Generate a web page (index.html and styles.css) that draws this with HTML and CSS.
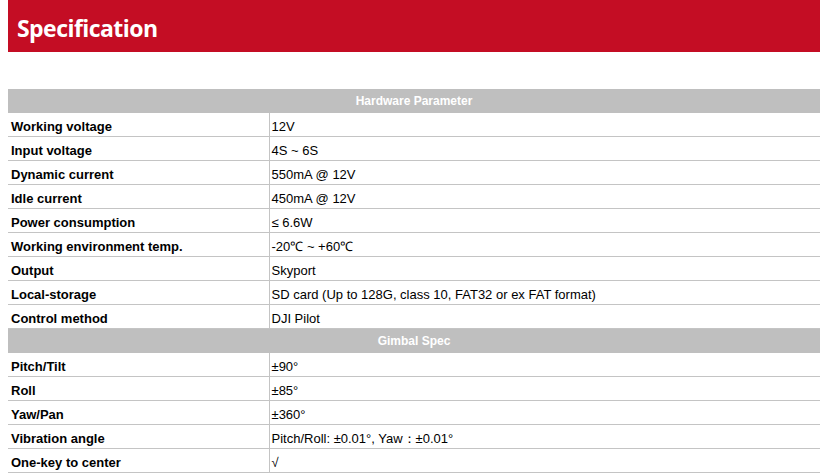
FILE: index.html
```html
<!DOCTYPE html>
<html>
<head>
<meta charset="utf-8">
<link rel="stylesheet" href="styles.css">
</head>
<body>
<div class="page">
  <div class="banner"><h1 class="title">Specification</h1></div>
  <table class="spec">
    <colgroup><col class="ck"><col class="cv"></colgroup>
    <tr class="group"><td colspan="2">Hardware Parameter</td></tr>
    <tr><td class="k">Working voltage</td><td class="v">12V</td></tr>
    <tr><td class="k">Input voltage</td><td class="v">4S ~ 6S</td></tr>
    <tr><td class="k">Dynamic current</td><td class="v">550mA @ 12V</td></tr>
    <tr><td class="k">Idle current</td><td class="v">450mA @ 12V</td></tr>
    <tr><td class="k">Power consumption</td><td class="v">≤ 6.6W</td></tr>
    <tr><td class="k">Working environment temp.</td><td class="v">-20℃ ~ +60℃</td></tr>
    <tr><td class="k">Output</td><td class="v">Skyport</td></tr>
    <tr><td class="k">Local-storage</td><td class="v">SD card (Up to 128G, class 10, FAT32 or ex FAT format)</td></tr>
    <tr><td class="k">Control method</td><td class="v">DJI Pilot</td></tr>
    <tr class="group"><td colspan="2">Gimbal Spec</td></tr>
    <tr><td class="k">Pitch/Tilt</td><td class="v">±90°</td></tr>
    <tr><td class="k">Roll</td><td class="v">±85°</td></tr>
    <tr><td class="k">Yaw/Pan</td><td class="v">±360°</td></tr>
    <tr><td class="k">Vibration angle</td><td class="v">Pitch/Roll: ±0.01°, Yaw：±0.01°</td></tr>
    <tr><td class="k">One-key to center</td><td class="v">√</td></tr>
  </table>
</div>
</body>
</html>
```
FILE: styles.css
```css
html, body {
  margin: 0;
  padding: 0;
  background: #ffffff;
}
.page {
  padding-left: 8px;
}
.banner {
  background: #c40d24;
  height: 52px;
  display: flex;
  align-items: center;
  padding-left: 9px;
  margin-bottom: 37px;
}
.title {
  margin: 0;
  color: #ffffff;
  font-family: "Open Sans", "Liberation Sans", sans-serif;
  font-weight: 700;
  font-size: 23px;
  letter-spacing: -0.55px;
  line-height: 1;
  padding-top: 4px;
}
.spec {
  width: 812px;
  border-collapse: collapse;
  table-layout: fixed;
  font-family: "Liberation Sans", Arial, sans-serif;
  font-size: 13px;
  color: #000000;
}
.ck {
  width: 261px;
}
.spec td {
  height: 17px;
  padding: 6px 0 0 3px;
  border-bottom: 1px solid #c4c4c4;
  vertical-align: top;
  white-space: nowrap;
  line-height: 15px;
}
.spec .k {
  font-weight: 700;
}
.spec .v {
  border-left: 1px solid #c4c4c4;
  padding-left: 2px;
}
.spec .group td {
  background: #bfbfbf;
  color: #ffffff;
  font-weight: 700;
  font-size: 12px;
  text-align: center;
  padding: 5px 0 0 0;
  height: 18px;
  border-bottom: 1px solid #bfbfbf;
}
```
